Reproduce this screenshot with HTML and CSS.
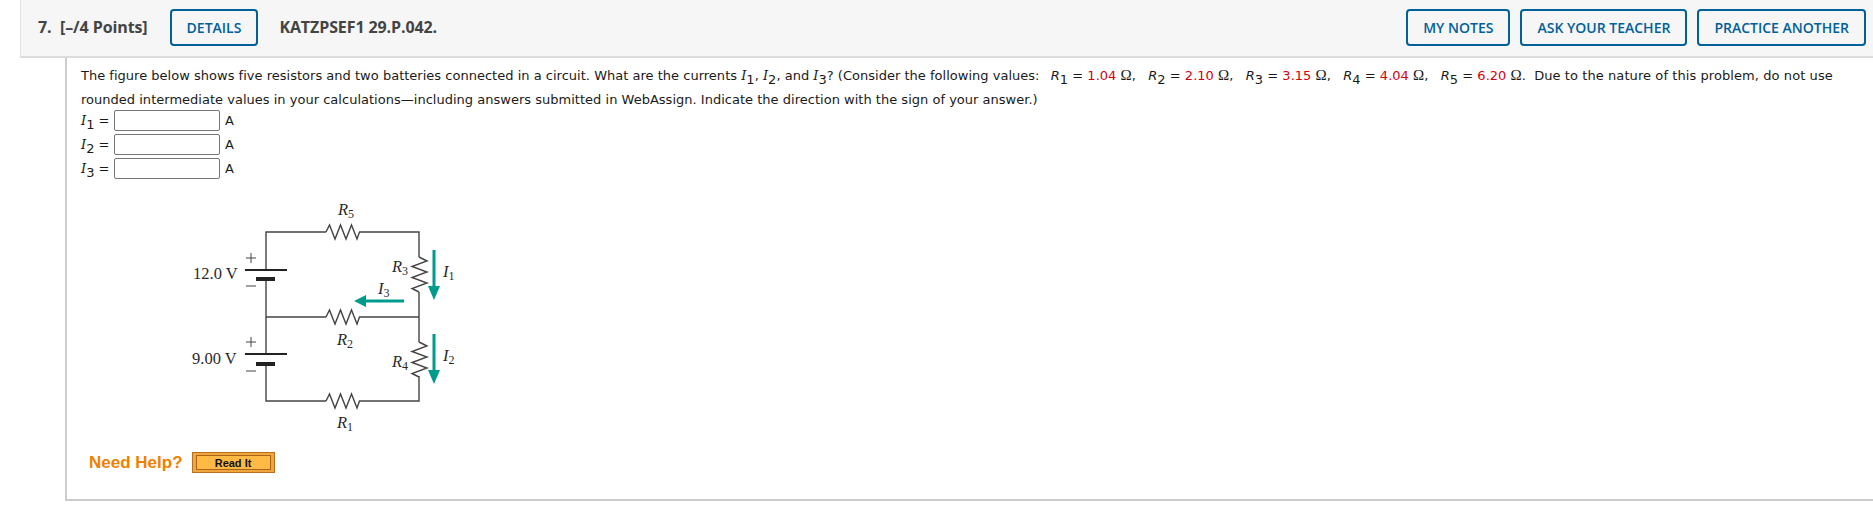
FILE: index.html
```html
<!DOCTYPE html>
<html lang="en">
<head>
  <meta charset="UTF-8">
  <title>KATZPSEF1 29.P.042.</title>
  <link rel="stylesheet" href="styles.css">
</head>
<body>
  <div class="question">
    <div class="q-header">
      <span class="q-num">7.</span>
      <span class="q-points">[&ndash;/4 Points]</span>
      <a class="q-btn details-btn">DETAILS</a>
      <span class="q-title">KATZPSEF1 29.P.042.</span>
      <div class="q-actions">
        <a class="q-btn">MY NOTES</a>
        <a class="q-btn">ASK YOUR TEACHER</a>
        <a class="q-btn">PRACTICE ANOTHER</a>
      </div>
    </div>

    <div class="q-body">
      <p class="q-text">The figure below shows five resistors and two batteries connected in a circuit. What are the currents <i class="mi">I</i><sub>1</sub>, <i class="mi">I</i><sub>2</sub>, and <i class="mi">I</i><sub>3</sub>? (Consider the following values:&nbsp; <i class="mv first">R</i><sub>1</sub> = <span class="val">1.04</span> <span class="unit">&Omega;</span>,&nbsp; &nbsp;<i class="mv">R</i><sub>2</sub> = <span class="val">2.10</span> <span class="unit">&Omega;</span>,&nbsp; &nbsp;<i class="mv">R</i><sub>3</sub> = <span class="val">3.15</span> <span class="unit">&Omega;</span>,&nbsp; &nbsp;<i class="mv">R</i><sub>4</sub> = <span class="val">4.04</span> <span class="unit">&Omega;</span>,&nbsp; &nbsp;<i class="mv">R</i><sub>5</sub> = <span class="val">6.20</span> <span class="unit">&Omega;</span>.&nbsp; <span class="tail">Due to the nature of this problem, do not use</span><br>rounded intermediate values in your calculations&mdash;including answers submitted in WebAssign. Indicate the direction with the sign of your answer.)</p>

      <div class="answers">
        <div class="answer-row"><label><i class="mi">I</i><sub>1</sub> =</label><input type="text"><span>A</span></div>
        <div class="answer-row"><label><i class="mi">I</i><sub>2</sub> =</label><input type="text"><span>A</span></div>
        <div class="answer-row"><label><i class="mi">I</i><sub>3</sub> =</label><input type="text"><span>A</span></div>
      </div>

      <svg class="circuit" width="300" height="250" viewBox="170 195 300 250">
        <g class="wire">
          <path d="M326 232H266V270M266 279V317M266 354V317H326M359 317H419M359 232H419V257M419 292V342M419 376V401H359M326 401H266V364"/>
          <path d="M326 232l3.5-7 5.5 14 5.5-14 5.5 14 5.5-14 5.5 14 2.5-7"/>
          <path d="M326 317l3.5-7 5.5 14 5.5-14 5.5 14 5.5-14 5.5 14 2.5-7"/>
          <path d="M326 401l3.5-7 5.5 14 5.5-14 5.5 14 5.5-14 5.5 14 2.5-7"/>
          <path d="M419 257l8 4-15 5.5 15 5.5-15 5.5 15 5.5-15 5.5 7 3.5"/>
          <path d="M419 342l8 4-15 5.5 15 5.5-15 5.5 15 5.5-15 5.5 7 3.5"/>
        </g>
        <g class="plates">
          <path d="M245 270H287M245 354H287"/>
          <path class="thick" d="M256 279H275M256 364H275"/>
          <path class="thin" d="M246 258H256M251 253V263M246 286H256M246 342H256M251 337V347M246 371H256"/>
        </g>
        <g class="arrows">
          <path d="M434 250V288M434 334V372M404 301H364"/>
          <path class="head" d="M428 286H440L434 300zM428 370H440L434 384zM366 295V307L354 301z"/>
        </g>
        <g class="labels">
          <text x="193" y="279">12.0 V</text>
          <text x="192" y="364">9.00 V</text>
          <text x="338" y="215"><tspan class="it">R</tspan><tspan class="s" dy="3">5</tspan></text>
          <text x="392" y="272"><tspan class="it">R</tspan><tspan class="s" dy="3">3</tspan></text>
          <text x="392" y="367"><tspan class="it">R</tspan><tspan class="s" dy="3">4</tspan></text>
          <text x="337" y="345"><tspan class="it">R</tspan><tspan class="s" dy="3">2</tspan></text>
          <text x="337" y="428"><tspan class="it">R</tspan><tspan class="s" dy="3">1</tspan></text>
          <text x="443" y="277"><tspan class="it">I</tspan><tspan class="s" dy="3">1</tspan></text>
          <text x="443" y="361"><tspan class="it">I</tspan><tspan class="s" dy="3">2</tspan></text>
          <text x="378" y="294"><tspan class="it">I</tspan><tspan class="s" dy="3">3</tspan></text>
        </g>
      </svg>

      <div class="help">
        <span class="help-label">Need Help?</span>
        <a class="read-it"><span>Read It</span></a>
      </div>
    </div>
  </div>
</body>
</html>
```

FILE: styles.css
```css
body {
  margin: 0;
  background: #fff;
  font-family: "DejaVu Sans", sans-serif;
  color: #1a1a1a;
}

.question {
  margin-left: 20px;
}

.q-header {
  display: flex;
  align-items: center;
  box-sizing: border-box;
  height: 58px;
  padding: 0 7px 2px 17px;
  background: #f6f6f6;
  border-left: 1px solid #e4e4e4;
  border-bottom: 2px solid #ddd;
  font-family: "Open Sans", sans-serif;
  font-size: 16px;
  font-weight: 700;
  letter-spacing: -0.1px;
  color: #444;
}

.q-num {
  width: 22px;
}

.q-btn {
  box-sizing: border-box;
  height: 37px;
  line-height: 33px;
  padding: 0 15px;
  border: 2px solid #00609a;
  border-radius: 4px;
  font-size: 14px;
  font-weight: 600;
  letter-spacing: 0;
  color: #00609a;
  background: #f6f6f6;
}

.details-btn {
  margin-left: 22px;
}

.q-title {
  margin-left: 21px;
}

.q-actions {
  display: flex;
  gap: 10px;
  margin-left: auto;
}

.q-body {
  box-sizing: border-box;
  height: 443px;
  margin-left: 45px;
  padding: 5px 0 0 14px;
  border-left: 2px solid #ccc;
  border-bottom: 2px solid #ccc;
}

.q-text {
  margin: 0;
  font-size: 13px;
  line-height: 24px;
  letter-spacing: 0.015px;
  white-space: nowrap;
}

.mv {
  font-size: 13px;
}

.mi {
  font-family: "DejaVu Serif", serif;
  font-size: 13px;
}

.first {
  margin-left: 3px;
}

.tail {
  letter-spacing: 0.08px;
}

sub {
  font-size: 13px;
  line-height: 0;
}

.val {
  color: #d4000e;
}

.unit {
  font-family: "Liberation Serif", serif;
  font-size: 15px;
}

.answers {
  margin-top: -4px;
}

.answer-row {
  display: flex;
  align-items: center;
  height: 24px;
  font-size: 13px;
}

.answer-row label {
  width: 33px;
  white-space: nowrap;
}

.answer-row input {
  box-sizing: border-box;
  width: 106px;
  height: 21px;
  margin: 0 5px 0 0;
  padding: 0;
  border: 1px solid #777;
  border-radius: 2px;
  background: #fff;
}

.circuit {
  display: block;
  margin: 15px 0 0 89px;
}

.wire path {
  fill: none;
  stroke: #444;
  stroke-width: 1.4;
}

.plates path {
  fill: none;
  stroke: #222;
  stroke-width: 2;
}

.plates .thick {
  stroke-width: 4;
}

.plates .thin {
  stroke: #444;
  stroke-width: 1;
}

.arrows path {
  fill: none;
  stroke: #009b8d;
  stroke-width: 3;
}

.arrows .head {
  fill: #009b8d;
  stroke: none;
}

.labels text {
  font-family: "Liberation Serif", serif;
  font-size: 16.5px;
  fill: #2a2a2a;
}

.labels .it {
  font-style: italic;
}

.labels .s {
  font-size: 12px;
}

.help {
  display: flex;
  align-items: center;
  gap: 9px;
  margin: 7px 0 0 8px;
}

.help-label {
  font-family: "Liberation Sans", sans-serif;
  font-size: 17px;
  font-weight: 700;
  color: #f08000;
}

.read-it {
  box-sizing: border-box;
  width: 83px;
  height: 21px;
  padding: 2px 3px;
  border: 1px solid #b8701c;
  background: #f0a63c;
  font-family: "Liberation Sans", sans-serif;
  font-size: 11px;
  font-weight: 700;
  text-align: center;
  color: #111;
}

.read-it span {
  display: block;
  height: 15px;
  line-height: 14px;
  box-sizing: border-box;
  border: 1px solid #a8641a;
  background: #ffba45;
}
```
